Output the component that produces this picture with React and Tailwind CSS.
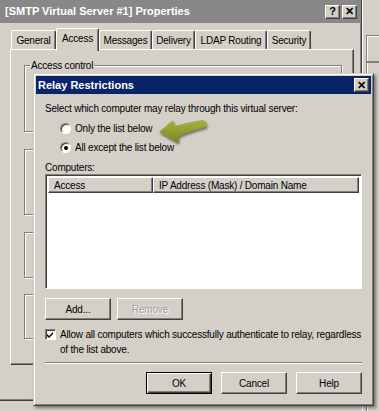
const raised = "border border-t-white border-l-white border-r-[#404040] border-b-[#404040] shadow-[inset_-1px_-1px_0_#808080]";

function Btn({ children, disabled, def, w = "w-[66px]" }) {
  return (
    <div className={`${w} h-[22px] flex items-center justify-center bg-[#d4d0c8] ${def ? "border border-black shadow-[inset_1px_1px_0_white,inset_-1px_-1px_0_#404040,inset_-2px_-2px_0_#808080]" : raised}`}>
      <span className={disabled ? "text-[#a0a0a0] [text-shadow:1px_1px_0_white]" : "text-black"}>{children}</span>
    </div>
  );
}

function Radio({ checked, label }) {
  return (
    <div className="flex items-center h-[19px] pl-[15px]">
      <div className="w-[11px] h-[11px] rounded-full bg-white border border-t-[#808080] border-l-[#808080] border-r-white border-b-white shadow-[inset_1px_1px_0_#404040] flex items-center justify-center">
        {checked && <div className="w-[4px] h-[4px] rounded-full bg-black" />}
      </div>
      <span className="ml-[4px]">{label}</span>
    </div>
  );
}

function TitleBtn({ children, cls = "" }) {
  return (
    <div className={`w-[15px] h-[14px] bg-[#d4d0c8] ${raised} flex items-center justify-center text-[11px] font-bold leading-none text-black ${cls}`}>
      {children}
    </div>
  );
}

function Tab({ label, w, active }) {
  return (
    <div className={`${w} ${active ? "h-[23px] -mb-[2px] bg-[#d4d0c8] z-10" : "h-[19px]"} flex items-center justify-center border-t border-l border-t-white border-l-white border-r border-r-[#404040] rounded-t-[2px] shadow-[inset_-1px_0_0_#808080]`}>
      <span className={active ? "-mt-[3px]" : ""}>{label}</span>
    </div>
  );
}

function Group({ top, h, label }) {
  return (
    <div className={`${top} ${h} ml-[13px] w-[318px] border border-[#808080] shadow-[1px_1px_0_white,inset_1px_1px_0_white] relative`}>
      {label && (
        <span className="absolute -top-[8px] left-[5px] bg-[#d4d0c8] px-[1px]">{label}</span>
      )}
    </div>
  );
}

export default function App() {
  return (
    <div
      className="relative w-[379px] h-[411px] bg-[#d4d0c8] overflow-hidden flex text-[10px] tracking-[-0.2px] text-black"
      style={{ fontFamily: '"Liberation Sans", Arial, sans-serif' }}
    >
      {/* background properties window */}
      <div className="w-[362px] h-[401px] flex flex-col border-r border-b border-r-[#404040] border-b-[#404040] shadow-[inset_-1px_-1px_0_#808080]">
        <div className="h-[23px] bg-[#888888] flex items-center pl-[5px] pr-[4px]">
          <span className="text-white font-bold text-[11px] tracking-[0px]">[SMTP Virtual Server #1] Properties</span>
          <div className="ml-auto flex gap-[2px]">
            <TitleBtn>?</TitleBtn>
            <TitleBtn>✕</TitleBtn>
          </div>
        </div>
        <div className="flex flex-col pl-[10px] pr-[7px] pt-[5px]">
          <div className="flex items-end h-[21px] pl-[1px]">
            <Tab label="General" w="w-[45px]" />
            <Tab label="Access" w="w-[43px]" active />
            <Tab label="Messages" w="w-[53px]" />
            <Tab label="Delivery" w="w-[43px]" />
            <Tab label="LDAP Routing" w="w-[72px]" />
            <Tab label="Security" w="w-[44px]" />
          </div>
          <div className="h-[316px] border border-t-white border-l-white border-r-[#404040] border-b-[#404040] shadow-[inset_-1px_-1px_0_#808080] flex flex-col">
            <Group top="mt-[15px]" h="h-[67px]" label="Access control" />
            <Group top="mt-[17px]" h="h-[66px]" />
            <Group top="mt-[17px]" h="h-[46px]" />
            <Group top="mt-[16px]" h="h-[45px]" />
          </div>
        </div>
      </div>

      {/* partial window at right */}
      <div className="flex-1 h-[411px] flex flex-col pl-[3px] border-l border-l-white">
        <div className="mt-[35px] h-[26px] border-t border-l border-t-[#808080] border-l-[#808080] shadow-[inset_1px_1px_0_white]" />
        <div className="h-[2px] bg-[#808080]" />
        <div className="flex-1 border-l border-l-[#808080] shadow-[inset_1px_0_0_white]" />
      </div>

      {/* Relay Restrictions dialog */}
      <div className="absolute left-[33px] top-[73px] w-[341px] h-[333px] bg-[#d4d0c8] border border-t-[#d4d0c8] border-l-[#d4d0c8] border-r-[#404040] border-b-[#404040] shadow-[inset_1px_1px_0_white,inset_-1px_-1px_0_#808080,2px_2px_3px_rgba(0,0,0,0.45)] p-[2px] flex flex-col">
        <div className="h-[18px] shrink-0 bg-[#0a246a] flex items-center pl-[2px] pr-[2px]">
          <span className="text-white font-bold text-[11px] tracking-[0px]">Relay Restrictions</span>
          <div className="ml-auto">
            <TitleBtn>✕</TitleBtn>
          </div>
        </div>
        <div className="flex flex-col pl-[9px] pr-[9px] relative">
          <div className="mt-[7px] h-[14px] flex items-center">Select which computer may relay through this virtual server:</div>
          <div className="mt-[4px]">
            <Radio label="Only the list below" />
            <Radio checked label="All except the list below" />
          </div>
          <div className="h-[14px] mt-[3px] flex items-center">Computers:</div>
          <div className="h-[115px] bg-white border border-t-[#808080] border-l-[#808080] border-r-white border-b-white shadow-[inset_1px_1px_0_#404040] p-[2px] pt-[2px] flex flex-col">
            <div className="flex h-[16px]">
              <div className={`w-[105px] h-full ${raised} bg-[#d4d0c8] flex items-center pl-[5px]`}>Access</div>
              <div className={`flex-1 h-full ${raised} bg-[#d4d0c8] flex items-center pl-[5px]`}>IP Address (Mask) / Domain Name</div>
            </div>
          </div>
          <div className="mt-[9px] flex gap-[6px]">
            <Btn>Add...</Btn>
            <Btn disabled>Remove</Btn>
          </div>
          <div className="mt-[7px] flex items-start">
            <div className="mt-[2px] w-[11px] h-[11px] shrink-0 bg-white border border-t-[#808080] border-l-[#808080] border-r-white border-b-white shadow-[inset_1px_1px_0_#404040] flex items-center justify-center">
              <svg width="7" height="7" viewBox="0 0 7 7"><path d="M0 3 L2 5 L6 1 L6 3 L2 7 L0 5 Z" fill="black" /></svg>
            </div>
            <div className="ml-[4px] leading-[15px]">
              Allow all computers which successfully authenticate to relay, regardless<br />of the list above.
            </div>
          </div>
          <div className="mt-[5px] h-[2px] border-t border-t-[#808080] border-b border-b-white" />
          <div className="mt-[8px] flex justify-end gap-[9px]">
            <Btn def>OK</Btn>
            <Btn>Cancel</Btn>
            <Btn>Help</Btn>
          </div>

          <svg className="absolute left-[121px] top-[22px] drop-shadow-[1px_2px_1px_rgba(0,0,0,0.45)]" width="54" height="30" viewBox="0 0 54 30">
            <defs>
              <linearGradient id="ag" x1="0" y1="0" x2="0" y2="1">
                <stop offset="0" stopColor="#a8b33c" />
                <stop offset="1" stopColor="#7a8620" />
              </linearGradient>
            </defs>
            <path d="M2 16 L16 4 L18 10 Q32 6 45 4 Q51 5 49 11 Q37 14 22 20 L21 27 Z" fill="url(#ag)" />
          </svg>
        </div>
      </div>
    </div>
  );
}
